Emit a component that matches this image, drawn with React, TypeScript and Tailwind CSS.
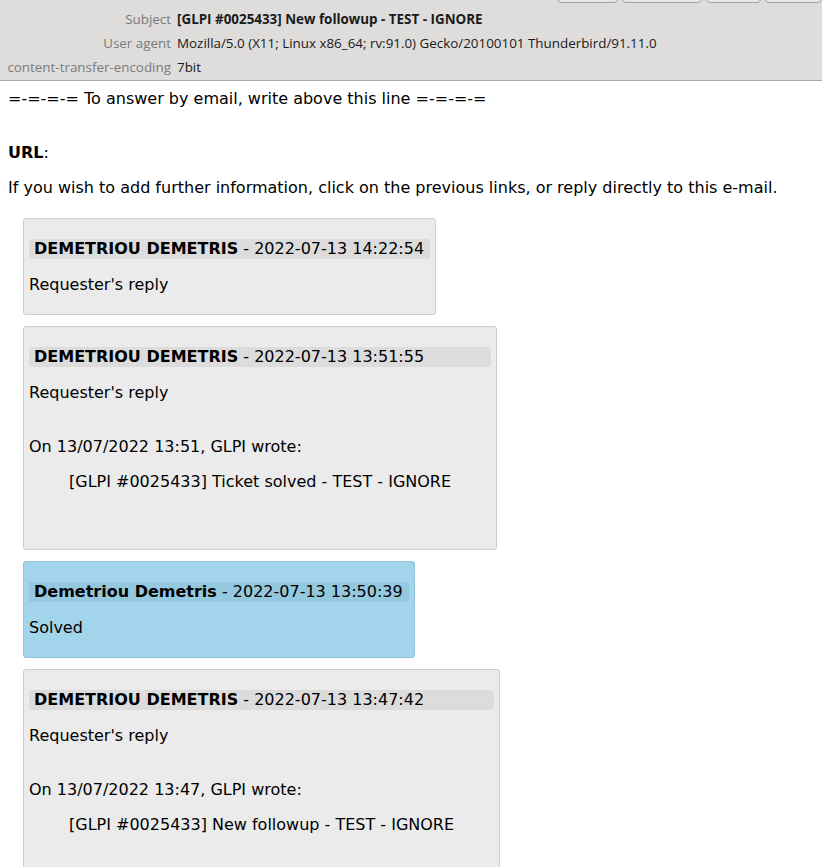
import React from 'react';

type Note = {
  author: string;
  date: string;
  lines: string[];
  quoteHead?: string;
  quote?: string;
  solution?: boolean;
};

const notes: Note[] = [
  { author: 'DEMETRIOU DEMETRIS', date: '2022-07-13 14:22:54', lines: ["Requester's reply"] },
  {
    author: 'DEMETRIOU DEMETRIS',
    date: '2022-07-13 13:51:55',
    lines: ["Requester's reply"],
    quoteHead: 'On 13/07/2022 13:51, GLPI wrote:',
    quote: '[GLPI #0025433] Ticket solved - TEST - IGNORE',
  },
  { author: 'Demetriou Demetris', date: '2022-07-13 13:50:39', lines: ['Solved'], solution: true },
  {
    author: 'DEMETRIOU DEMETRIS',
    date: '2022-07-13 13:47:42',
    lines: ["Requester's reply"],
    quoteHead: 'On 13/07/2022 13:47, GLPI wrote:',
    quote: '[GLPI #0025433] New followup - TEST - IGNORE',
  },
];

const headers = [
  { label: 'Subject', value: '[GLPI #0025433] New followup - TEST - IGNORE', bold: true },
  { label: 'User agent', value: 'Mozilla/5.0 (X11; Linux x86_64; rv:91.0) Gecko/20100101 Thunderbird/91.11.0' },
  { label: 'content-transfer-encoding', value: '7bit' },
];

function NoteCard({ note }: { note: Note }) {
  return (
    <div
      className={`w-fit rounded-[3px] border px-[5px] py-[5px] ${
        note.solution ? 'bg-[#a2d5ec] border-[#8fc3da]' : 'bg-[#ebebeb] border-[#cfcfcf]'
      }`}
    >
      <div
        className={`mt-[15px] h-[20px] rounded-[3px] pl-[5px] pr-[6px] leading-[20px] whitespace-nowrap ${
          note.solution ? 'bg-[#94c8df]' : 'bg-[#dcdcdc]'
        }`}
      >
        <b>{note.author}</b> - {note.date}
      </div>
      {note.lines.map((l, i) => (
        <p key={i} className="mt-[16px] leading-[19px]">{l}</p>
      ))}
      {note.quoteHead && (
        <>
          <p className="mt-[35px] leading-[19px]">{note.quoteHead}</p>
          <p className="mt-[16px] mx-[40px] leading-[19px] whitespace-nowrap">{note.quote}</p>
          <div className="h-[53px]" />
        </>
      )}
      {!note.quoteHead && <div className="h-[15px]" />}
    </div>
  );
}

export default function App() {
  return (
    <div className="min-h-[867px] bg-white text-black" style={{ fontFamily: '"DejaVu Sans", sans-serif' }}>
      {/* message header pane */}
      <div
        className="bg-[#dfdddb] border-b border-[#a9a9a9] pb-[4px] text-[13.4px] text-[#1a1a1a]"
        style={{ fontFamily: '"Open Sans", "Noto Sans", sans-serif' }}
      >
        <div className="flex h-[3px] justify-end items-end gap-[4px] overflow-hidden">
          <div className="w-[61px] h-[10px] rounded-b-[4px] border border-[#a3a3a3] bg-[#e8e7e5]" />
          <div className="w-[80px] h-[10px] rounded-b-[4px] border border-[#a3a3a3] bg-[#e8e7e5]" />
          <div className="w-[55px] h-[10px] rounded-b-[4px] border border-[#a3a3a3] bg-[#e8e7e5]" />
          <div className="w-[57px] h-[10px] rounded-b-[4px] border border-[#a3a3a3] bg-[#e8e7e5]" />
        </div>
        <div className="mt-[7px] flex flex-col gap-[6px]">
          {headers.map((h) => (
            <div key={h.label} className="flex items-center h-[18px]">
              <div className="w-[171px] shrink-0 text-right text-[#7b7b7b] whitespace-nowrap">{h.label}</div>
              <div className={`pl-[6px] whitespace-nowrap ${h.bold ? 'font-bold' : ''}`}>{h.value}</div>
            </div>
          ))}
        </div>
      </div>

      {/* body */}
      <div className="px-[8px] pt-[8px] text-[16px]">
        <p className="leading-[19px]">=-=-=-= To answer by email, write above this line =-=-=-=</p>
        <p className="mt-[35px] leading-[19px]">
          <b>URL</b>:
        </p>
        <p className="mt-[16px] leading-[19px] whitespace-nowrap">
          If you wish to add further information, click on the previous links, or reply directly to this e-mail.
        </p>

        <div className="mt-[21px] ml-[15px] flex flex-col items-start gap-[11px]">
          {notes.map((n, i) => (
            <NoteCard key={i} note={n} />
          ))}
        </div>
      </div>
    </div>
  );
}
